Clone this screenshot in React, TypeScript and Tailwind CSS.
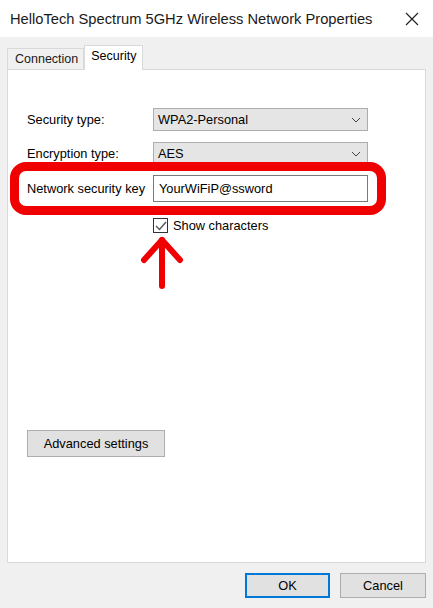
import React from "react";

function Chevron() {
  return (
    <svg width="10" height="6" viewBox="0 0 10 6" className="mr-[6px]">
      <polyline points="1,1 5,5 9,1" fill="none" stroke="#444" strokeWidth="1" />
    </svg>
  );
}

function Select({ value }: { value: string }) {
  return (
    <div className="w-[215px] h-[23px] bg-[#e5e5e5] border border-[#adadad] flex items-center justify-between pl-[4px]">
      <span>{value}</span>
      <Chevron />
    </div>
  );
}

export default function App() {
  return (
    <div
      className="w-[433px] h-[608px] flex flex-col bg-[#f0f0f0] text-black overflow-hidden"
      style={{ fontFamily: '"Liberation Sans", Arial, sans-serif' }}
    >
      {/* Title bar */}
      <div className="h-[37px] bg-white flex items-center justify-between pl-[10px] pr-[14px] shrink-0">
        <span className="text-[14.7px] text-[#1a1a1a] mt-[1px]">HelloTech Spectrum 5GHz Wireless Network Properties</span>
        <svg width="14" height="14" viewBox="0 0 14 14" className="mt-[1px]">
          <path d="M1 1 L13 13 M13 1 L1 13" stroke="#222" strokeWidth="1.2" />
        </svg>
      </div>

      {/* Body */}
      <div className="flex-1 flex flex-col px-[7px] pt-[8px]">
        {/* Tabs */}
        <div className="flex items-end h-[24px] text-[12.5px] relative z-10">
          <div className="h-[21px] pl-[7px] pr-[5px] border border-b-0 border-[#d9d9d9] bg-[#f0f0f0] flex items-center text-[#1a1a1a]">
            Connection
          </div>
          <div className="h-[25px] -mb-[1px] px-[6px] border border-b-0 border-[#d9d9d9] bg-white flex items-center pb-[3px]">
            Security
          </div>
        </div>

        {/* Panel */}
        <div className="h-[494px] bg-white border border-[#d9d9d9] relative text-[12.8px]">
          <div className="flex flex-col pt-[38px] pl-[19px]">
            <div className="flex items-center h-[23px]">
              <span className="w-[126px]">Security type:</span>
              <Select value="WPA2-Personal" />
            </div>
            <div className="flex items-center h-[23px] mt-[11px]">
              <span className="w-[126px]">Encryption type:</span>
              <Select value="AES" />
            </div>
            <div className="flex items-center h-[27px] mt-[10px]">
              <span className="w-[126px]">Network security key</span>
              <div className="w-[215px] h-[27px] border border-[#7a7a7a] bg-white flex items-center pl-[5px]">
                YourWiFiP@ssword
              </div>
            </div>
            <div className="flex items-center h-[15px] mt-[16px] ml-[126px]">
              <div className="w-[15px] h-[15px] border border-[#333] flex items-center justify-center">
                <svg width="12" height="10" viewBox="0 0 12 10">
                  <polyline points="1,5 4.5,8.5 11,1" fill="none" stroke="#555" strokeWidth="1.4" />
                </svg>
              </div>
              <span className="ml-[5px]">Show characters</span>
            </div>
            <div className="mt-[197px]">
              <div className="w-[138px] h-[27px] bg-[#e1e1e1] border border-[#adadad] flex items-center justify-center">
                Advanced settings
              </div>
            </div>
          </div>

          {/* Red highlight annotation */}
          <div className="absolute left-[2px] top-[92px] w-[376px] h-[53px] border-[9px] border-[#f00000] rounded-[16px]" />

          {/* Red arrow annotation */}
          <svg className="absolute left-[132px] top-[166px]" width="44" height="56" viewBox="0 0 44 56">
            <path d="M22 4 L22 50" stroke="#f00000" strokeWidth="6" strokeLinecap="round" fill="none" />
            <path d="M4 24 L22 4 L40 24" stroke="#f00000" strokeWidth="6" strokeLinecap="round" strokeLinejoin="round" fill="none" />
          </svg>
        </div>

        {/* Bottom buttons */}
        <div className="flex justify-end gap-[10px] mt-[10px] text-[12.8px]">
          <div className="w-[85px] h-[25px] bg-[#e1e1e1] border-2 border-[#0078d7] flex items-center justify-center">
            OK
          </div>
          <div className="w-[86px] h-[25px] bg-[#e1e1e1] border border-[#adadad] flex items-center justify-center">
            Cancel
          </div>
        </div>
      </div>
    </div>
  );
}
